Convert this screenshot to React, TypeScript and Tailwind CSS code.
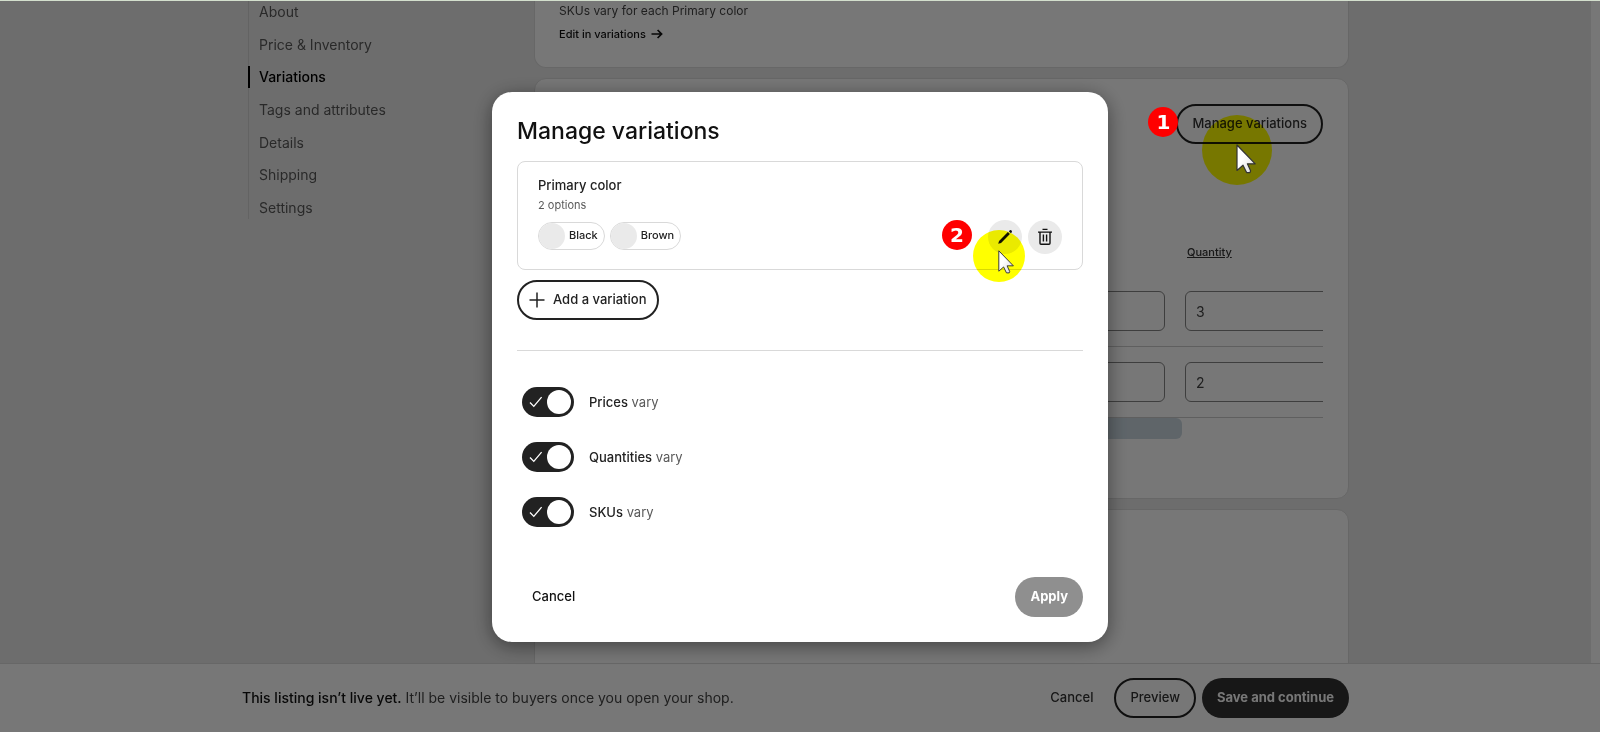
import React, { useState } from 'react';

const navItems = [
  "About", "Price & Inventory", "Variations", "Tags and attributes", "Details", "Shipping", "Settings"
];

const options = ["Black", "Brown"];

const quantities = ["3", "2"];

const varyItems = ["Prices", "Quantities", "SKUs"];

const ArrowIcon = () => (
  <svg width="12" height="10" viewBox="0 0 12 10" fill="none" stroke="currentColor" strokeWidth="1.7" aria-hidden="true">
    <path d="M0.5 5H10.5M6.6 1L10.6 5L6.6 9" />
  </svg>
);

const PlusIcon = () => (
  <svg width="16" height="16" viewBox="0 0 16 16" fill="none" stroke="currentColor" strokeWidth="1.5" aria-hidden="true">
    <path d="M8 0.5V15.5M0.5 8H15.5" />
  </svg>
);

const PencilIcon = () => (
  <svg width="18" height="18" viewBox="0 0 18 18" fill="#111" aria-hidden="true">
    <path d="M2.2 15.8L3.1 12.9L11.9 4.1L13.9 6.1L5.1 14.9Z" />
    <path d="M12.8 3.2L13.6 2.4Q14.4 1.7 15.2 2.3L15.7 2.8Q16.3 3.6 15.6 4.4L14.8 5.2Z" />
  </svg>
);

const TrashIcon = () => (
  <svg width="16" height="18" viewBox="0 0 16 18" fill="none" stroke="#111" strokeWidth="1.4" aria-hidden="true">
    <path d="M5.5 1.4H10.5M1 4.1H15M3 4.1V15.2Q3 16.2 4 16.2H12Q13 16.2 13 15.2V4.1M6.4 6.6V13.6M9.6 6.6V13.6" />
  </svg>
);

const CheckIcon = () => (
  <svg width="14" height="12" viewBox="0 0 14 12" fill="none" stroke="#fff" strokeWidth="1.3" aria-hidden="true">
    <path d="M1 6.5L4.8 10.4L12.6 1.2" />
  </svg>
);

const Cursor = ({ className }: { className: string }) => (
  <svg viewBox="0 0 20 30" className={className} aria-hidden="true">
    <defs>
      <linearGradient id="cursorFill" x1="0" y1="0" x2="1" y2="1">
        <stop offset="0.4" stopColor="#fff" />
        <stop offset="1" stopColor="#d8d8d8" />
      </linearGradient>
    </defs>
    <path
      d="M1 1V26.5L7 21.2L10.6 28.6H14L14.6 26.8L11.4 19.8H19.2Z"
      fill="url(#cursorFill)"
      stroke="#333"
      strokeWidth="1.2"
      strokeLinejoin="round"
    />
  </svg>
);

const Marker = ({ label, className }: { label: string; className: string }) => (
  <span className={`absolute flex size-[30px] items-center justify-center rounded-full bg-[#ff0000] font-['DejaVu_Sans',sans-serif] text-xl font-bold text-white ${className}`}>
    {label}
  </span>
);

const Switch = ({ name }: { name: string }) => {
  const [on, setOn] = useState(true);

  return (
    <label className="flex items-center leading-5">
      <input type="checkbox" role="switch" checked={on} onChange={() => setOn(!on)} className="peer sr-only" />
      <span className={`mr-[15px] flex h-[30px] w-[52px] items-center rounded-full px-[3px] ${on ? 'justify-between bg-[#222]' : 'justify-start bg-gray-400'}`}>
        {on && <span className="pl-1"><CheckIcon /></span>}
        <span className="size-6 rounded-full bg-white" />
      </span>
      <span className="text-[13px] text-[#595959]">
        <span className="font-medium text-[#222]">{name}</span> vary
      </span>
    </label>
  );
};

const ListingPage = () => (
  <div className="flex min-h-0 flex-1 overflow-hidden">
    <div className="min-w-0 flex-1 overflow-hidden">
      <div className="mx-auto flex max-w-[1107px] items-start">
        {/* Section navigation */}
        <aside className="w-[292px] shrink-0 pl-[6px]">
          <nav className="flex h-[218px] w-full flex-col justify-between border-l border-[#d4d4d4] text-sm leading-[22px] text-[#595959]">
            {navItems.map((item) => (
              <a
                key={item}
                href="#"
                className={item === "Variations" ? "-ml-px border-l-2 border-black pl-[9px] font-medium text-black" : "pl-[10px]"}
              >
                {item}
              </a>
            ))}
          </nav>
        </aside>

        <div className="flex min-w-0 flex-1 flex-col gap-[10px]">
          <section className="rounded-b-xl border border-t-0 border-[#dcdcdc] bg-white px-6 pb-[23px] text-xs">
            <p className="leading-5 text-[#444]">SKUs vary for each Primary color</p>
            <a href="#" className="mt-[3px] flex items-center gap-[5px] text-[11px] leading-5 font-medium text-[#111]">
              Edit in variations <ArrowIcon />
            </a>
          </section>

          <section className="rounded-xl border border-[#dcdcdc] bg-white px-[25px] pt-[25px] pb-[59px]">
            <div className="flex justify-end">
              <div className="relative">
                <button className="h-10 rounded-full border-2 border-[#222] px-[14px] text-[13px] font-medium text-[#333]">
                  Manage variations
                </button>
                <span className="pointer-events-none absolute top-[11px] left-[26px] size-[70px] rounded-full bg-[#ffff00] mix-blend-multiply" />
                <Marker label="1" className="top-[3px] -left-7 z-50" />
                <Cursor className="absolute top-10 left-[60px] z-50 h-[30px] w-5" />
              </div>
            </div>

            {/* Variations table, wider than the card */}
            <div className="mt-[100px] overflow-hidden">
              <table className="w-[860px] table-fixed text-left">
                <colgroup>
                  <col className="w-[400px]" />
                  <col className="w-[225px]" />
                  <col />
                </colgroup>
                <thead>
                  <tr>
                    <th />
                    <th />
                    <th className="pb-4 pl-[2px] text-[11px] leading-4 font-medium text-[#333] underline">Quantity</th>
                  </tr>
                </thead>
                <tbody>
                  {quantities.map((quantity, i) => (
                    <tr key={i} className="border-b border-[#ccc]">
                      <td />
                      <td className="py-[15px] pr-5">
                        <input aria-label="Price" className="block h-10 w-full rounded-md border border-[#858585] px-[10px] text-sm" />
                      </td>
                      <td className="py-[15px]">
                        <input
                          aria-label="Quantity"
                          defaultValue={quantity}
                          className="block h-10 w-full rounded-md border border-[#858585] px-[10px] text-sm text-[#444]"
                        />
                      </td>
                    </tr>
                  ))}
                </tbody>
              </table>
              <div className="h-[21px] w-[622px] rounded-r-md bg-[#cbd9e2]" />
            </div>
          </section>

          <section className="h-[300px] rounded-xl border border-[#dcdcdc] bg-white" />
        </div>
      </div>
    </div>
    <div className="w-[9px] shrink-0 bg-white" />
  </div>
);

const Footer = () => (
  <footer className="border-t border-[#dcdcdc] bg-white pr-[9px] text-[#222]">
    <div className="mx-auto flex h-[68px] max-w-[1107px] items-center justify-between text-[13px]">
      <p className="text-sm text-[#444]">
        <span className="font-medium text-[#111]">This listing isn’t live yet.</span> It’ll be visible to buyers once you open your shop.
      </p>
      <div className="flex items-center gap-[6px] font-medium text-[#333]">
        <button className="h-10 px-[15px]">Cancel</button>
        <button className="h-10 rounded-full border-2 border-[#222] px-[14px]">Preview</button>
        <button className="h-10 rounded-full bg-[#323232] px-[15px] font-bold text-white">Save and continue</button>
      </div>
    </div>
  </footer>
);

const ManageModal = () => (
  <div className="fixed inset-0 top-px z-40 flex items-center justify-center bg-black/[0.535]">
    <div
      role="dialog"
      aria-labelledby="dialog-title"
      className="w-[616px] rounded-[20px] bg-white px-[25px] pt-[23px] pb-[25px] text-[#222] shadow-[0_4px_20px_rgba(0,0,0,0.45)]"
    >
      <h1 id="dialog-title" className="text-[23px] leading-8 font-medium text-[#111]">Manage variations</h1>

      <div className="relative mt-[14px] rounded-lg border border-[#d9d9d9] px-5 pt-[13px] pb-[15px]">
        <h2 className="text-[13px] leading-5 font-medium">Primary color</h2>
        <p className="text-[11px] leading-5 text-[#595959]">2 options</p>
        <div className="flex items-start gap-[6px] pt-[5px]">
          <div className="mr-auto flex gap-[5px] pt-[2px]">
            {options.map((option) => (
              <span key={option} className="flex h-7 items-center gap-1 rounded-full border border-[#d9d9d9] pr-[6px] text-[11px] font-medium">
                <span className="size-[26px] rounded-full bg-[#eaeaea]" />
                {option}
              </span>
            ))}
          </div>
          <button aria-label="Edit" className="flex size-[34px] items-center justify-center rounded-full bg-[#eaeaea]">
            <PencilIcon />
          </button>
          <button aria-label="Delete" className="flex size-[34px] items-center justify-center rounded-full bg-[#eaeaea]">
            <TrashIcon />
          </button>
        </div>

        <Marker label="2" className="right-[110px] bottom-[19px]" />
        <span className="pointer-events-none absolute right-[57px] -bottom-[13px] size-[52px] rounded-full bg-[#ffff00] mix-blend-multiply" />
        <Cursor className="absolute right-[68px] -bottom-[5px] h-6 w-4" />
      </div>

      <button className="mt-[10px] flex h-10 items-center gap-2 rounded-full border-2 border-[#222] px-[10px] text-[13px] font-medium">
        <PlusIcon /> Add a variation
      </button>

      <hr className="mt-[30px] border-[#d9d9d9]" />

      <div className="mt-9 flex flex-col gap-[25px] pl-[5px]">
        {varyItems.map((name) => <Switch key={name} name={name} />)}
      </div>

      <div className="mt-[50px] flex items-center justify-between text-[13px]">
        <button className="h-10 px-[15px] font-medium text-[#111]">Cancel</button>
        <button className="h-10 rounded-full bg-[#8f8f8f] px-[15px] font-bold text-white">Apply</button>
      </div>
    </div>
  </div>
);

export default function App() {
  return (
    <div className="flex h-screen flex-col overflow-hidden border-t border-[#d3dfcd] bg-[#eaeaea] font-['Inter',sans-serif]">
      <ListingPage />
      <Footer />
      <ManageModal />
    </div>
  );
}
